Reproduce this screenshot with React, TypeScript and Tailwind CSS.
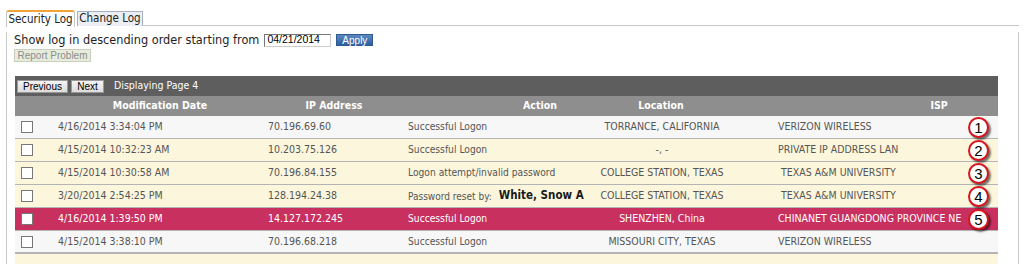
import React from 'react';

type Row = {
  date: string;
  ip: string;
  action: React.ReactNode;
  location: string;
  isp: string;
  tone: 'plain' | 'cream' | 'alert';
  num?: number;
};

const ROWS: Row[] = [
  { date: '4/16/2014 3:34:04 PM', ip: '70.196.69.60', action: 'Successful Logon', location: 'TORRANCE, CALIFORNIA', isp: 'VERIZON WIRELESS', tone: 'plain', num: 1 },
  { date: '4/15/2014 10:32:23 AM', ip: '10.203.75.126', action: 'Successful Logon', location: '-, -', isp: 'PRIVATE IP ADDRESS LAN', tone: 'cream', num: 2 },
  { date: '4/15/2014 10:30:58 AM', ip: '70.196.84.155', action: 'Logon attempt/invalid password', location: 'COLLEGE STATION, TEXAS', isp: '\u00a0TEXAS A&M UNIVERSITY', tone: 'cream', num: 3 },
  {
    date: '3/20/2014 2:54:25 PM',
    ip: '128.194.24.38',
    action: (
      <>
        <span className="text-[10px]">Password reset by:</span>
        <span className="ml-[7px] text-[11.5px] font-bold text-[#1a1a1a]">White, Snow A</span>
      </>
    ),
    location: 'COLLEGE STATION, TEXAS',
    isp: '\u00a0TEXAS A&M UNIVERSITY',
    tone: 'cream',
    num: 4,
  },
  { date: '4/16/2014 1:39:50 PM', ip: '14.127.172.245', action: 'Successful Logon', location: 'SHENZHEN, China', isp: 'CHINANET GUANGDONG PROVINCE NE', tone: 'alert', num: 5 },
  { date: '4/15/2014 3:38:10 PM', ip: '70.196.68.218', action: 'Successful Logon', location: 'MISSOURI CITY, TEXAS', isp: 'VERIZON WIRELESS', tone: 'plain' },
];

const toneClass = {
  plain: 'bg-[#f7f7f7] text-[#555555]',
  cream: 'bg-[#fcf6dc] text-[#555555]',
  alert: 'bg-[#c8305f] text-white',
};

function Marker({ n }: { n: number }) {
  return (
    <div
      className="flex h-[21px] w-[21px] items-center justify-center rounded-full border-2 border-[#d8141c] bg-white text-[15px] leading-none text-black shadow-[2px_2px_2px_rgba(0,0,0,0.55)]"
      style={{ fontFamily: '"Liberation Sans", Arial, sans-serif' }}
    >
      {n}
    </div>
  );
}

function LogRow({ row, last }: { row: Row; last?: boolean }) {
  return (
    <div
      className={`flex h-[23px] items-center border-b border-[#b4b4b4] ${last ? 'border-b-2' : ''} ${toneClass[row.tone]}`}
    >
      <div className="flex w-[35px] pl-[6px]">
        <div className="h-[12px] w-[12px] border border-[#777] bg-white" />
      </div>
      <div className="w-[210px] pl-[8px]">{row.date}</div>
      <div className="w-[140px] pl-[8px]">{row.ip}</div>
      <div className="flex w-[182px] items-center whitespace-nowrap pl-[8px] text-[10.2px]">{row.action}</div>
      <div className="w-[160px] whitespace-nowrap text-center">{row.location}</div>
      <div className="flex-1 whitespace-nowrap pl-[36px]">{row.isp}</div>
      <div className="flex w-[30px] items-center">{row.num ? <Marker n={row.num} /> : null}</div>
    </div>
  );
}

export default function App() {
  const ui = { fontFamily: '"DejaVu Sans Condensed", "DejaVu Sans", Tahoma, sans-serif' };
  const arial = { fontFamily: '"Liberation Sans", Arial, sans-serif' };

  return (
    <div className="h-[264px] w-[1024px] overflow-hidden bg-white text-[#222]" style={ui}>
      {/* tabs */}
      <div className="flex items-end pl-[6px] pt-[10px]">
        <div className="relative z-10 -mb-px flex h-[17px] w-[69px] shrink-0 items-center justify-center whitespace-nowrap rounded-t-[3px] border-x border-t-2 border-x-[#c5c5c5] border-t-[#f0a43a] bg-white text-[11.5px]">
          Security Log
        </div>
        <div className="ml-[2px] flex h-[15px] w-[66px] shrink-0 items-center justify-center whitespace-nowrap border border-b-0 border-[#a9b0bf] bg-[#eceef3] text-[11.5px]">
          Change Log
        </div>
        <div className="w-[876px] border-b border-[#c8c8c8]" />
      </div>

      {/* panel */}
      <div className="ml-[6px] h-[240px] w-[1013px] border-x border-[#c8c8c8] pl-[7px]">
        <div className="mt-[6px] flex h-[16px] items-center">
          <span className="whitespace-nowrap text-[12.6px] text-[#1e1e1e]">Show log in descending order starting from</span>
          <div
            className="ml-[5px] flex h-[13px] w-[67px] items-center border border-t-[#777] border-l-[#777] border-b-[#ccc] border-r-[#ccc] bg-white pl-[2px] text-[10.5px] text-black"
            style={arial}
          >
            04/21/2014
          </div>
          <div
            className="ml-[5px] flex h-[12px] w-[37px] items-center justify-center border border-[#2e5a8f] bg-gradient-to-b from-[#5a88c2] to-[#2f609d] text-[10px] text-white"
            style={arial}
          >
            Apply
          </div>
        </div>
        <div
          className="mt-[1px] flex h-[13px] w-[77px] items-center justify-center border border-[#c9cfbd] bg-[#e7ecdd] text-[10px] text-[#8c8c8c]"
          style={arial}
        >
          Report Problem
        </div>

        {/* table */}
        <div className="ml-[1px] mt-[14px] w-[983px] text-[10.5px]">
          <div className="flex h-[20px] items-center bg-[#5e5e5e] pl-[2px]">
            <div
              className="flex h-[13px] w-[51px] items-center justify-center border border-[#999] bg-gradient-to-b from-[#f4f4f4] to-[#dcdcdc] text-[10px] text-black"
              style={arial}
            >
              Previous
            </div>
            <div
              className="ml-[3px] flex h-[13px] w-[33px] items-center justify-center border border-[#999] bg-gradient-to-b from-[#f4f4f4] to-[#dcdcdc] text-[10px] text-black"
              style={arial}
            >
              Next
            </div>
            <span className="ml-[10px] text-white">Displaying Page 4</span>
          </div>
          <div className="flex h-[20px] items-center bg-[#8e8e8e] font-bold text-white">
            <div className="w-[35px]" />
            <div className="w-[220px] text-center">Modification Date</div>
            <div className="w-[128px] text-center">IP Address</div>
            <div className="w-[102px]" />
            <div className="w-[80px] text-center">Action</div>
            <div className="w-[162px] text-center">Location</div>
            <div className="w-[158px]" />
            <div className="w-[78px] text-center">ISP</div>
          </div>
          {ROWS.map((r, i) => (
            <LogRow key={i} row={r} last={i === ROWS.length - 1} />
          ))}
          <div className="h-[10px] bg-[#fcf6dc]" />
        </div>
      </div>
    </div>
  );
}
